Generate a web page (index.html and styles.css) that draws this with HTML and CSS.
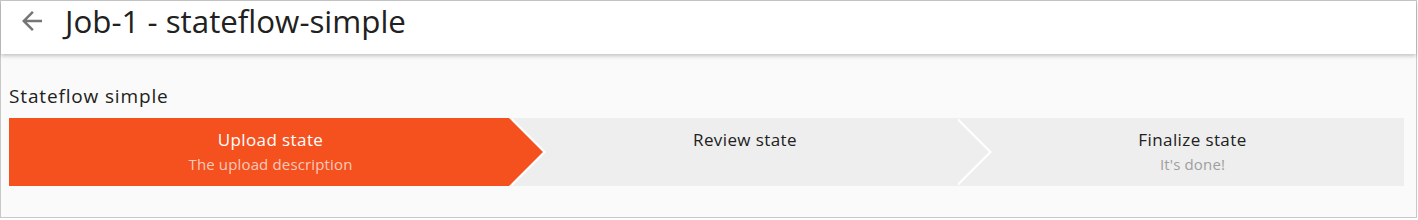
FILE: index.html
```html
<!DOCTYPE html>
<html lang="en">
<head>
    <meta charset="UTF-8">
    <meta name="viewport" content="width=device-width, initial-scale=1.0">
    <title>Job-1 - stateflow-simple</title>
    <link rel="stylesheet" href="styles.css">
</head>
<body>
    <div class="frame">
        <div class="header">
            <div class="header-row">
                <svg class="back-icon" viewBox="0 0 24 24" width="30" height="30">
                    <path d="M20 11H7.83l5.59-5.59L12 4l-8 8 8 8 1.41-1.41L7.83 13H20v-2z"/>
                </svg>
                <h1 class="page-title">Job-1 - stateflow-simple</h1>
            </div>
        </div>
        <div class="content">
            <h2 class="flow-title">Stateflow simple</h2>
            <div class="steps">
                <div class="step step-upload active">
                    <p class="step-name">Upload state</p>
                    <p class="step-desc">The upload description</p>
                </div>
                <div class="step step-review">
                    <p class="step-name">Review state</p>
                    <p class="step-desc"></p>
                </div>
                <div class="step step-finalize">
                    <p class="step-name">Finalize state</p>
                    <p class="step-desc">It's done!</p>
                </div>
            </div>
        </div>
    </div>
</body>
</html>
```

FILE: styles.css
```css
body {
    margin: 0;
    font-family: 'Open Sans', 'Liberation Sans', sans-serif;
    color: #212121;
    background: #fff;
}
.frame {
    width: 1415px;
    height: 216px;
    border: 1px solid #c8c8c8;
    display: flex;
    flex-direction: column;
    background: #fafafa;
}
.header {
    height: 53px;
    background: #fff;
    box-shadow: 0 2px 4px rgba(0, 0, 0, 0.22);
    position: relative;
    z-index: 2;
}
.header-row {
    height: 40px;
    display: flex;
    align-items: center;
    padding-left: 16px;
}
.back-icon {
    fill: #757575;
}
.page-title {
    margin: 0 0 0 18px;
    font-size: 31.3px;
    font-weight: 400;
    line-height: 40px;
}
.content {
    flex: 1;
    padding: 30px 11px 0 8px;
}
.flow-title {
    margin: 0 0 10px;
    font-size: 19px;
    font-weight: 400;
    line-height: 24px;
    letter-spacing: 0.85px;
}
.steps {
    display: flex;
    height: 68px;
}
.step {
    position: relative;
    box-sizing: border-box;
    padding: 12px 0 0 26px;
    background: #eee;
    text-align: center;
}
.step-upload { width: 500px; padding-left: 23px; }
.step-review { width: 446px; }
.step-finalize { width: 449px; }
.step p {
    margin: 0;
}
.step-name {
    font-size: 17px;
    line-height: 20px;
    letter-spacing: 0.4px;
    color: #212121;
}
.step-desc {
    margin-top: 4px !important;
    font-size: 15px;
    line-height: 20px;
    letter-spacing: 0.15px;
    color: #9e9e9e;
}
.step.active {
    background: #f4511e;
}
.step.active .step-name { color: #fff; }
.step.active .step-desc { color: rgba(255, 255, 255, 0.7); }

/* chevron tip with a white edge */
.step:not(:last-child)::before,
.step:not(:last-child)::after {
    content: '';
    position: absolute;
    top: 0;
    z-index: 1;
    border-top: 34px solid transparent;
    border-bottom: 34px solid transparent;
    border-left: 34px solid #fff;
}
.step:not(:last-child)::before {
    right: -37px;
}
.step:not(:last-child)::after {
    right: -34px;
    border-left-color: #eee;
}
.step.active::after {
    border-left-color: #f4511e;
}
```
